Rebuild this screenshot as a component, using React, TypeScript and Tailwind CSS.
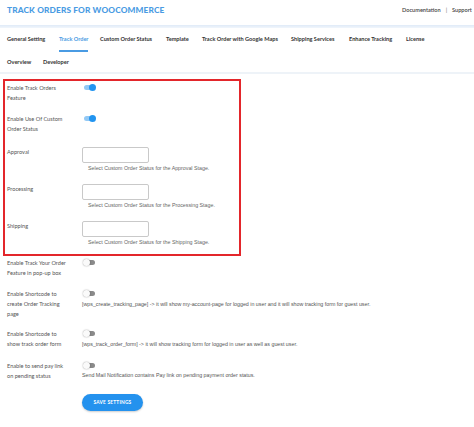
import React from "react";

function Toggle({ on }: { on: boolean }) {
  return (
    <div className="relative w-[13px] h-[7px]">
      <div
        className={
          on
            ? "absolute left-[1px] top-[1px] w-[11px] h-[5px] rounded-full bg-[#93c9f5]"
            : "absolute left-[1px] top-[1px] w-[11px] h-[5px] rounded-full bg-[#8a8a8a]"
        }
      />
      {on ? (
        <div className="absolute right-0 top-0 w-[7px] h-[7px] rounded-full bg-[#2194f0]" />
      ) : (
        <div className="absolute left-0 top-0 w-[7px] h-[7px] rounded-full bg-[#fafafa] shadow-[0_0_1.5px_rgba(0,0,0,0.45)]" />
      )}
    </div>
  );
}

function Label({ lines }: { lines: string[] }) {
  return (
    <div className="w-[75px] shrink-0 text-[5.6px] leading-[10px] text-[#555]">
      {lines.map((l, i) => (
        <div key={i} className="whitespace-nowrap">
          {l}
        </div>
      ))}
    </div>
  );
}

function SelectRow({ label, stage, h }: { label: string; stage: string; h: string }) {
  return (
    <div className={`flex ${h}`}>
      <Label lines={[label]} />
      <div className="flex flex-col">
        <div className="w-[67px] h-[16px] border border-[#c9c9c9] rounded-[2px] bg-white" />
        <div className="pl-[6px] pt-[1px] text-[5.3px] leading-[8px] text-[#666] whitespace-nowrap font-['Liberation_Sans',Arial,sans-serif]">
          Select Custom Order Status for the {stage} Stage.
        </div>
      </div>
    </div>
  );
}

const tabs: { name: string; w: string; active?: boolean }[] = [
  { name: "General Setting", w: "w-[52px]" },
  { name: "Track Order", w: "w-[41px]", active: true },
  { name: "Custom Order Status", w: "w-[66px]" },
  { name: "Template", w: "w-[36px]" },
  { name: "Track Order with Google Maps", w: "w-[89px]" },
  { name: "Shipping Services", w: "w-[58px]" },
  { name: "Enhance Tracking", w: "w-[57px]" },
  { name: "License", w: "w-[40px]" },
];

export default function App() {
  return (
    <div className="w-[474px] h-[427px] overflow-hidden bg-white font-['Lato','Noto_Sans',sans-serif] leading-none">
      {/* header */}
      <div className="flex items-center h-[20px] pl-[7px]">
        <div className="text-[8.3px] leading-[10px] font-black tracking-[0.15px] text-[#4a9be3] whitespace-nowrap">
          TRACK ORDERS FOR WOOCOMMERCE
        </div>
        <div className="ml-auto flex items-center gap-[5px] text-[5.6px] leading-[10px] text-[#444] whitespace-nowrap w-[72px] font-semibold">
          <span>Documentation</span>
          <span className="text-[#888]">|</span>
          <span>Support</span>
        </div>
      </div>
      <div className="h-[5px]" />
      <div className="h-[3px] bg-gradient-to-b from-[#dfeaf7] to-[#f1f6fc]" />
      {/* tabs */}
      <div className="flex pl-[7px] h-[24px]">
        {tabs.map((t) => (
          <div key={t.name} className={`${t.w} shrink-0 pt-[6px] flex flex-col items-start`}>
            <div
              className={`flex flex-col text-[5.6px] font-bold leading-[10px] whitespace-nowrap ${
                t.active ? "text-[#4a9be3]" : "text-[#333]"
              }`}
            >
              <div className="h-[10px]">{t.name}</div>
              <div className={`mt-[6px] h-[2px] ${t.active ? "bg-[#4a9be3]" : "bg-transparent"}`} />
            </div>
          </div>
        ))}
      </div>
      <div className="flex pl-[7px] pt-[5px] h-[20px] text-[5.6px] font-bold leading-[10px] text-[#333]">
        <div className="w-[36px] h-[10px]">Overview</div>
        <div className="h-[10px]">Developer</div>
      </div>
      <div className="h-[2px] bg-[#eef3f8]" />
      {/* red box */}
      <div className="mt-[5px] ml-[3px] w-[238px] border-2 border-[#e3262b] pl-[2px] pt-[2px] pb-[8px]">
        <div className="flex h-[31px]">
          <Label lines={["Enable Track Orders", "Feature"]} />
          <div className="h-[8px] flex items-center pl-[1px]">
            <Toggle on />
          </div>
        </div>
        <div className="flex h-[33px]">
          <Label lines={["Enable Use Of Custom", "Order Status"]} />
          <div className="h-[8px] flex items-center pl-[1px]">
            <Toggle on />
          </div>
        </div>
        <SelectRow label="Approval" stage="Approval" h="h-[37px]" />
        <SelectRow label="Processing" stage="Processing" h="h-[37px]" />
        <SelectRow label="Shipping" stage="Shipping" h="h-[25px]" />
      </div>
      {/* rest */}
      <div className="pl-[7px] mt-[2px]">
        <div className="flex h-[31px]">
          <Label lines={["Enable Track Your Order", "Feature in pop-up box"]} />
          <div className="h-[8px] flex items-center pl-[1px]">
            <Toggle on={false} />
          </div>
        </div>
        <div className="flex h-[40px]">
          <Label lines={["Enable Shortcode to", "create Order Tracking", "page"]} />
          <div className="flex flex-col">
            <div className="h-[8px] flex items-center pl-[1px]">
              <Toggle on={false} />
            </div>
            <div className="mt-[2px] text-[5.3px] leading-[10px] text-[#555] whitespace-nowrap font-['Liberation_Sans',Arial,sans-serif]">
              [wps_create_tracking_page] -&gt; it will show my-account-page for logged in user and it will show tracking form for guest user.
            </div>
          </div>
        </div>
        <div className="flex h-[32px]">
          <Label lines={["Enable Shortcode to", "show track order form"]} />
          <div className="flex flex-col">
            <div className="h-[8px] flex items-center pl-[1px]">
              <Toggle on={false} />
            </div>
            <div className="mt-[2px] text-[5.3px] leading-[10px] text-[#555] whitespace-nowrap font-['Liberation_Sans',Arial,sans-serif]">
              [wps_track_order_form] -&gt; it will show tracking form for logged in user as well as guest user.
            </div>
          </div>
        </div>
        <div className="flex h-[33px]">
          <Label lines={["Enable to send pay link", "on pending status"]} />
          <div className="flex flex-col">
            <div className="h-[8px] flex items-center pl-[1px]">
              <Toggle on={false} />
            </div>
            <div className="mt-[1px] text-[5.3px] leading-[10px] text-[#555] whitespace-nowrap font-['Liberation_Sans',Arial,sans-serif]">
              Send Mail Notification contains Pay link on pending payment order status.
            </div>
          </div>
        </div>
        <div className="pl-[75px]">
          <div className="w-[61px] h-[17px] rounded-full bg-[#2492ee] shadow-[0_1px_2px_rgba(0,0,0,0.2)] flex items-center justify-center text-white text-[4.8px] font-bold tracking-[0.2px]">
            SAVE SETTINGS
          </div>
        </div>
      </div>
    </div>
  );
}
